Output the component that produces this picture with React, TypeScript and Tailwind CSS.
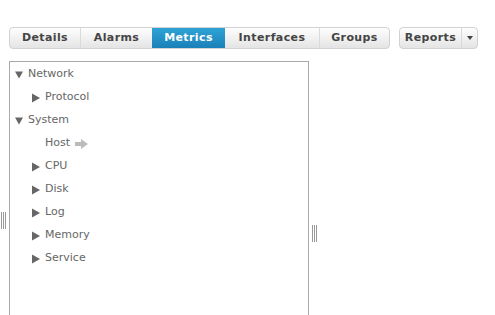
import React from "react";

const tabs = [
  { label: "Details", w: "w-[70px]" },
  { label: "Alarms", w: "w-[72px]" },
  { label: "Metrics", w: "w-[73px]", active: true },
  { label: "Interfaces", w: "w-[94px]" },
  { label: "Groups", w: "w-[70px]" },
];

type Node = { label: string; level: number; kind: "open" | "closed" | "leaf"; arrow?: boolean };

const tree: Node[] = [
  { label: "Network", level: 0, kind: "open" },
  { label: "Protocol", level: 1, kind: "closed" },
  { label: "System", level: 0, kind: "open" },
  { label: "Host", level: 1, kind: "leaf", arrow: true },
  { label: "CPU", level: 1, kind: "closed" },
  { label: "Disk", level: 1, kind: "closed" },
  { label: "Log", level: 1, kind: "closed" },
  { label: "Memory", level: 1, kind: "closed" },
  { label: "Service", level: 1, kind: "closed" },
];

function Toggle({ kind }: { kind: Node["kind"] }) {
  if (kind === "leaf") return <span className="w-[12px]" />;
  return (
    <svg width="12" height="10" viewBox="0 0 12 10" className="shrink-0">
      {kind === "open" ? (
        <polygon points="0,1.5 8,1.5 4,8.5" fill="#666" />
      ) : (
        <polygon points="0,0.5 8,5 0,9.5" fill="#666" />
      )}
    </svg>
  );
}

function Grip() {
  return (
    <div className="flex gap-[1px]">
      <div className="h-[17px] w-[1px] bg-[#999]" />
      <div className="h-[17px] w-[1px] bg-[#999]" />
      <div className="h-[17px] w-[1px] bg-[#999]" />
    </div>
  );
}

export default function App() {
  return (
    <div className="h-[315px] w-[495px] overflow-hidden bg-white font-['DejaVu_Sans',Verdana,sans-serif]">
      <div className="flex pl-[9px] pt-[27px]">
        <div className="flex h-[22px] overflow-hidden rounded-[4px] border border-[#d2d2d2] bg-gradient-to-b from-[#fefefe] to-[#e4e4e4]">
          {tabs.map((t, i) => (
            <div
              key={t.label}
              className={`flex items-center justify-center text-[11px] font-bold tracking-[0.4px] ${t.w} ${
                t.active
                  ? "bg-gradient-to-b from-[#2ea3d6] to-[#1a80b8] text-white"
                  : "text-[#444]"
              } ${i > 0 && !t.active && !tabs[i - 1].active ? "border-l border-[#dadada]" : ""}`}
            >
              {t.label}
            </div>
          ))}
        </div>
        <div className="ml-[9px] flex h-[22px] overflow-hidden rounded-[4px] border border-[#d2d2d2] bg-gradient-to-b from-[#fefefe] to-[#e4e4e4]">
          <div className="flex w-[61px] items-center justify-center text-[11px] font-bold tracking-[0.4px] text-[#444]">Reports</div>
          <div className="flex w-[16px] items-center justify-center border-l border-[#dadada]">
            <svg width="6" height="4" viewBox="0 0 6 4">
              <polygon points="0,0 6,0 3,4" fill="#444" />
            </svg>
          </div>
        </div>
      </div>

      <div className="mt-[12px] flex">
        <div className="w-[9px] pl-[1px] pt-[151px]">
          <Grip />
        </div>
        <div className="h-[260px] w-[300px] border border-b-0 border-[#aaa] pt-[1px]">
          {tree.map((n) => (
            <div
              key={n.label}
              className={`flex h-[23px] items-center gap-[1px] text-[11px] text-[#666] ${
                n.level === 0 ? "pl-[5px]" : "pl-[22px]"
              }`}
            >
              <Toggle kind={n.kind} />
              <span>{n.label}</span>
              {n.arrow && (
                <svg width="14" height="10" viewBox="0 0 14 10" className="ml-[4px]">
                  <rect x="0" y="3" width="7" height="4" fill="#bbb" />
                  <polygon points="6,0 13,5 6,10" fill="#bbb" />
                </svg>
              )}
            </div>
          ))}
        </div>
        <div className="ml-[3px] pt-[164px]">
          <Grip />
        </div>
      </div>
    </div>
  );
}
